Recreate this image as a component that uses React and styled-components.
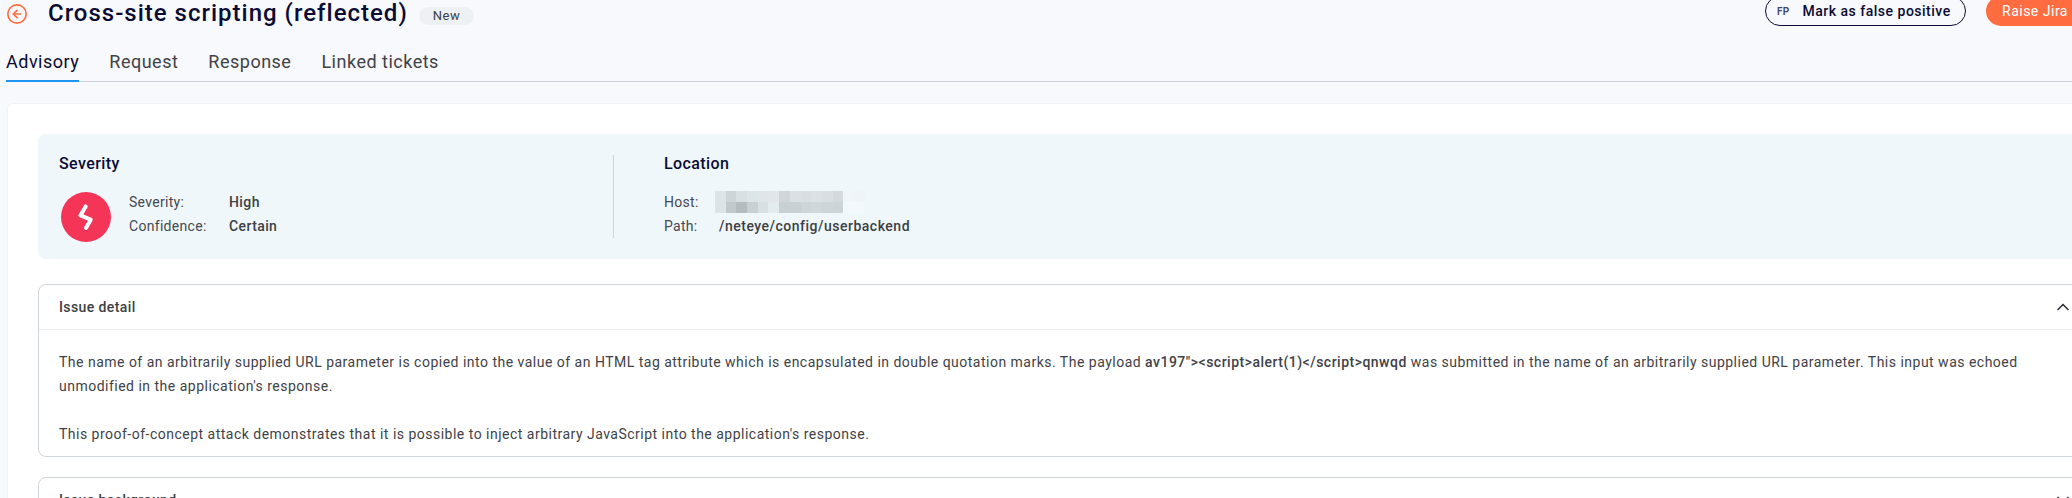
import styled, { createGlobalStyle } from "styled-components";
import { ArrowLeftCircle, ChevronUp, ChevronDown } from "lucide-react";

const GlobalStyle = createGlobalStyle`
  html, body {
    margin: 0;
    padding: 0;
    overflow: hidden;
    background: #f8f9fd;
    font-family: Roboto, "Liberation Sans", sans-serif;
  }
`;

const Page = styled.div`
  width: 2116px;
  height: 509px;
  margin-top: -11px;
  overflow: hidden;
  background: #f8f9fd;
`;

const Header = styled.header`
  display: flex;
  align-items: flex-start;
  justify-content: space-between;
  height: 36px;
  padding-left: 7px;
`;

const TitleGroup = styled.div`
  display: flex;
  align-items: center;
  height: 48px;
`;

const BackIcon = styled(ArrowLeftCircle)`
  width: 22px;
  height: 22px;
  color: #ff6c40;
  stroke-width: 1.8;
  margin: 2px 0 0 -1px;
`;

const Title = styled.h1`
  margin: 0 11px 0 20px;
  font-size: 24px;
  font-weight: 500;
  letter-spacing: 1px;
  color: #0b0b33;
`;

const Badge = styled.span`
  display: inline-block;
  margin-top: 6px;
  padding: 0 14px;
  line-height: 18px;
  border-radius: 9px;
  background: #edf1f3;
  color: #3d4047;
  font-size: 13px;
  letter-spacing: 0.5px;
`;

const Actions = styled.div`
  display: flex;
  gap: 20px;
  margin-top: 7px;
`;

const PillButton = styled.button`
  height: 30px;
  border-radius: 15px;
  font-family: inherit;
  font-size: 14px;
  font-weight: 500;
  letter-spacing: 0.5px;
  cursor: pointer;
`;

const OutlineButton = styled(PillButton)`
  display: flex;
  align-items: center;
  width: 201px;
  padding: 0 0 0 11px;
  background: transparent;
  border: 1px solid #0b0b33;
  color: #0b0b33;
`;

const FpMark = styled.span`
  margin-right: 13px;
  font-size: 10px;
  font-weight: 600;
  letter-spacing: 0.3px;
  color: #44445f;
`;

const JiraButton = styled(PillButton)`
  width: 130px;
  padding: 0 0 0 16px;
  text-align: left;
  background: #ff6c40;
  border: 0;
  color: #fff;
  font-weight: 400;
`;

const TabBar = styled.nav`
  display: flex;
  gap: 30px;
  height: 45px;
  margin: 11px 0 0 6px;
  border-bottom: 1px solid #cdd0d8;
`;

const Tab = styled.a`
  height: 46px;
  box-sizing: border-box;
  padding-top: 14px;
  font-size: 18px;
  line-height: 24px;
  letter-spacing: 0.5px;
  color: ${(props) => (props.$active ? "#0b0b33" : "#3f4247")};
  border-bottom: 2px solid ${(props) => (props.$active ? "#1f95f2" : "transparent")};
`;

const Card = styled.main`
  margin: 21px 0 0 7px;
  padding: 30px 31px 30px 30px;
  height: 500px;
  background: #fff;
  border-radius: 6px;
  border: 1px solid #f0f2f6;
  border-right: 0;
  box-sizing: border-box;
`;

const InfoPanel = styled.section`
  display: flex;
  height: 125px;
  box-sizing: border-box;
  background: #f0f7fb;
  border-radius: 8px;
`;

const InfoColumn = styled.div`
  width: ${(props) => props.$width}px;
  padding: 20px 0 0 ${(props) => props.$pad}px;
  box-sizing: border-box;
`;

const InfoHeading = styled.h3`
  margin: 0;
  font-size: 16px;
  line-height: 20px;
  font-weight: 500;
  letter-spacing: 0.4px;
  color: #0b0b33;
`;

const SeverityRow = styled.div`
  display: flex;
  align-items: flex-start;
  gap: 18px;
  margin: 16px 0 0 2px;
`;

const SeverityIcon = styled.svg`
  flex: none;
  margin-top: 2px;
`;

const Divider = styled.div`
  width: 1px;
  height: 83px;
  margin-top: 21px;
  background: #cfd3d6;
`;

const FactGrid = styled.dl`
  display: grid;
  grid-template-columns: ${(props) => props.$label}px 1fr;
  grid-auto-rows: 24px;
  margin: 0;
  font-size: 14px;
  letter-spacing: 0.3px;
  align-items: center;
`;

const FactLabel = styled.dt`
  color: #46494e;
`;

const FactValue = styled.dd`
  margin: 0;
  font-weight: 500;
  letter-spacing: 0.4px;
  color: #3c3f44;
`;

const PathValue = styled(FactValue)`
  letter-spacing: 0.5px;
`;

const LocationGrid = styled(FactGrid)`
  margin-top: 16px;
`;

const Mosaic = styled.div`
  display: grid;
  grid-template-columns: repeat(14, 10.7px);
  grid-auto-rows: 11px;
  margin-left: -4px;
`;

const Accordion = styled.section`
  margin-top: ${(props) => props.$top}px;
  background: #fff;
  border: 1px solid #cfd5d8;
  border-radius: 8px;
`;

const AccordionHead = styled.div`
  display: flex;
  align-items: center;
  justify-content: space-between;
  height: 44px;
  padding: 0 11px 0 20px;
  font-size: 14px;
  font-weight: 500;
  letter-spacing: 0.4px;
  color: #3c3f44;
`;

const AccordionBody = styled.div`
  box-sizing: border-box;
  height: 127px;
  padding: 20px 20px 0;
  border-top: 1px solid #eceef0;
  font-size: 14px;
  line-height: 24px;
  letter-spacing: 0.49px;
  color: #3f4247;

  p {
    margin: 0 0 24px;
  }
  b {
    font-weight: 500;
  }
`;

const HostPixels = [
  "#dce4e8", "#cdd5d8", "#d8e0e3", "#dce5e8", "#dfe5e8", "#e0e6ea", "#cfd5d8", "#dae0e3", "#d8dee1", "#dbe1e4", "#d8dee1", "#d3d9dc", "#eff5f8", "#eef4f7",
  "#dce4e8", "#c2c9cc", "#b5bcbf", "#c9d0d3", "#d9e0e3", "#e2ebed", "#c9d0d3", "#c9d0d3", "#ced5d8", "#d0d6d9", "#ced5d8", "#cdd4d7", "#f2f8fb", "#f2f8fb",
];

export default function App() {
  return (
    <>
      <GlobalStyle />
      <Page>
        <Header>
          <TitleGroup>
            <BackIcon />
            <Title>Cross-site scripting (reflected)</Title>
            <Badge>New</Badge>
          </TitleGroup>
          <Actions>
            <OutlineButton>
              <FpMark>FP</FpMark>Mark as false positive
            </OutlineButton>
            <JiraButton>Raise Jira</JiraButton>
          </Actions>
        </Header>
        <TabBar>
          <Tab $active>Advisory</Tab>
          <Tab>Request</Tab>
          <Tab>Response</Tab>
          <Tab>Linked tickets</Tab>
        </TabBar>
        <Card>
          <InfoPanel>
            <InfoColumn $width={575} $pad={21}>
              <InfoHeading>Severity</InfoHeading>
              <SeverityRow>
                <SeverityIcon width="50" height="50" viewBox="0 0 50 50">
                  <circle cx="25" cy="25" r="25" fill="#f43558" />
                  <path
                    d="M24.7 14.4 19.4 23.4 29.7 27.7 25 36"
                    fill="none"
                    stroke="#fff"
                    strokeWidth="4"
                    strokeLinecap="round"
                    strokeLinejoin="round"
                  />
                </SeverityIcon>
                <FactGrid $label={100}>
                  <FactLabel>Severity:</FactLabel>
                  <FactValue>High</FactValue>
                  <FactLabel>Confidence:</FactLabel>
                  <FactValue>Certain</FactValue>
                </FactGrid>
              </SeverityRow>
            </InfoColumn>
            <Divider />
            <InfoColumn $width={900} $pad={50}>
              <InfoHeading>Location</InfoHeading>
              <LocationGrid $label={55}>
                <FactLabel>Host:</FactLabel>
                <Mosaic>
                  {HostPixels.map((color, i) => (
                    <span key={i} style={{ background: color }} />
                  ))}
                </Mosaic>
                <FactLabel>Path:</FactLabel>
                <PathValue>/neteye/config/userbackend</PathValue>
              </LocationGrid>
            </InfoColumn>
          </InfoPanel>
          <Accordion $top={25}>
            <AccordionHead>
              Issue detail
              <ChevronUp size={20} color="#33363b" />
            </AccordionHead>
            <AccordionBody>
              <p>
                The name of an arbitrarily supplied URL parameter is copied into the value of an HTML tag attribute which is
                encapsulated in double quotation marks. The payload <b>av197"&gt;&lt;script&gt;alert(1)&lt;/script&gt;qnwqd</b> was
                submitted in the name of an arbitrarily supplied URL parameter. This input was echoed unmodified in the
                application's response.
              </p>
              <p>
                This proof-of-concept attack demonstrates that it is possible to inject arbitrary JavaScript into the
                application's response.
              </p>
            </AccordionBody>
          </Accordion>
          <Accordion $top={20}>
            <AccordionHead>
              Issue background
              <ChevronDown size={20} color="#33363b" />
            </AccordionHead>
          </Accordion>
        </Card>
      </Page>
    </>
  );
}
